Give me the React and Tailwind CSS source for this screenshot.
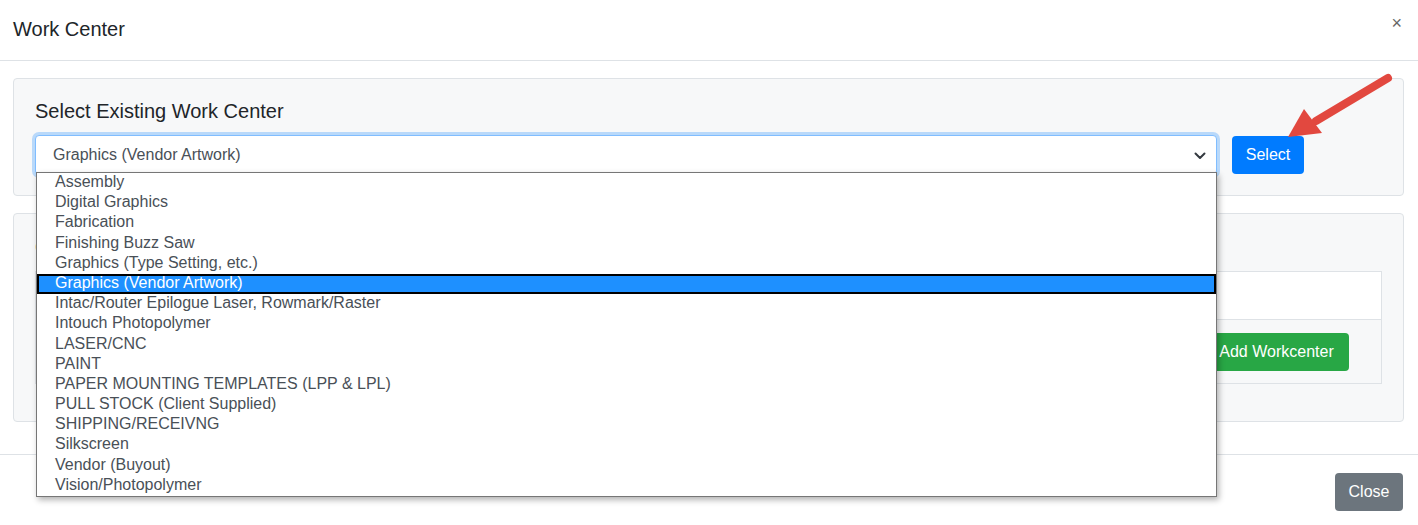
import React from 'react';

const options = [
  'Assembly',
  'Digital Graphics',
  'Fabrication',
  'Finishing Buzz Saw',
  'Graphics (Type Setting, etc.)',
  'Graphics (Vendor Artwork)',
  'Intac/Router Epilogue Laser, Rowmark/Raster',
  'Intouch Photopolymer',
  'LASER/CNC',
  'PAINT',
  'PAPER MOUNTING TEMPLATES (LPP & LPL)',
  'PULL STOCK (Client Supplied)',
  'SHIPPING/RECEIVNG',
  'Silkscreen',
  'Vendor (Buyout)',
  'Vision/Photopolymer',
];

const selected = 'Graphics (Vendor Artwork)';

// red callout arrow pointing at the Select button
const CalloutArrow = () => (
  <svg className="absolute left-[1280px] top-[68px]" width="120" height="80" viewBox="0 0 120 80">
    <line x1="108" y1="10" x2="36" y2="53" stroke="#e2483f" strokeWidth="8" strokeLinecap="round" />
    <polygon points="8,69 24,41 42,65" fill="#e2483f" />
  </svg>
);

export default function App() {
  return (
    <div className="relative w-[1418px] h-[525px] bg-white text-[#212529] overflow-hidden" style={{ fontFamily: '"Liberation Sans", Arial, sans-serif' }}>
      {/* header */}
      <div className="flex items-center justify-between h-[61px] pl-[13px] pr-[16px] border-b border-[#dee2e6]">
        <h5 className="text-[20px] leading-[24px] -mt-[2px]">Work Center</h5>
        <span className="text-[18px] leading-none text-[#666] -mt-[14px]">×</span>
      </div>

      {/* body */}
      <div className="pl-[13px] pr-[14px] pt-[17px] pb-[32px] flex flex-col gap-[17px]">
        <div className="bg-[#f7f8f9] border border-[#dee2e6] rounded-[4px] px-[21px] pt-[20px] pb-[20px]">
          <h5 className="text-[20px] leading-[24px]">Select Existing Work Center</h5>
          <div className="flex items-center gap-[15px] mt-[12px]">
            <div className="flex-1 h-[40px] bg-white border border-[#80bdff] rounded-[4px] shadow-[0_0_0_3px_rgba(0,123,255,0.25)] flex items-center justify-between pl-[17px] pr-[10px] text-[16px] text-[#495057]">
              <span>Graphics (Vendor Artwork)</span>
              <svg width="12" height="8" viewBox="0 0 12 8" className="mt-[1px]">
                <path d="M1.5 1.5 L6 6 L10.5 1.5" stroke="#343a40" strokeWidth="2" fill="none" strokeLinecap="round" strokeLinejoin="round" />
              </svg>
            </div>
            <button className="h-[38px] w-[72px] bg-[#007bff] text-white text-[16px] rounded-[4px] mr-[78px]">Select</button>
          </div>
        </div>

        <div className="bg-[#f7f8f9] border border-[#dee2e6] rounded-[4px] px-[21px] pt-[21px] pb-[37px]">
          <h5 className="text-[20px] leading-[24px] text-[#212529]">Create New Work Center</h5>
          <div className="mt-[12px] border border-[#dee2e6]">
            <div className="h-[48px] bg-white border-b border-[#dee2e6]"></div>
            <div className="h-[63px] flex items-center justify-end pr-[32px]">
              <button className="h-[38px] w-[145px] bg-[#28a745] text-white text-[16px] rounded-[4px]">Add Workcenter</button>
            </div>
          </div>
        </div>
      </div>

      {/* footer */}
      <div className="border-t border-[#dee2e6] flex justify-end items-center pt-[18px] pr-[15px]">
        <button className="h-[38px] w-[68px] bg-[#6c757d] text-white text-[16px] rounded-[4px]">Close</button>
      </div>

      {/* open native dropdown list */}
      <div className="absolute left-[36px] top-[172px] w-[1181px] bg-white border border-[#767676] shadow-[2px_3px_6px_rgba(0,0,0,0.3)] text-[16px] text-[#495057]">
        {options.map((o) => (
          <div
            key={o}
            className={
              o === selected
                ? 'h-[20.2px] leading-[14px] pl-[16px] bg-[#1e90ff] text-white border-2 border-black'
                : 'h-[20.2px] leading-[18px] pl-[18px]'
            }
          >
            {o}
          </div>
        ))}
      </div>

      <CalloutArrow />
    </div>
  );
}
